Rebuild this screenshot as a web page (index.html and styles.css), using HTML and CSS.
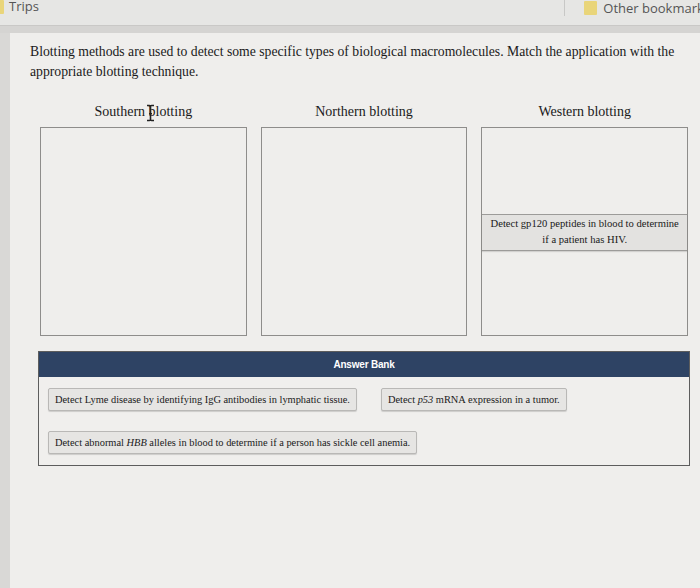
FILE: index.html
```html
<!DOCTYPE html>
<html>
<head>
<meta charset="utf-8">
<link rel="stylesheet" href="styles.css">
</head>
<body>
<div class="topbar">
  <div class="bm bm-left">
    <span class="folder"></span>
    <span class="bm-label">Trips</span>
  </div>
  <div class="bm bm-right">
    <span class="sep"></span>
    <span class="folder"></span>
    <span class="bm-label">Other bookmarks</span>
  </div>
</div>
<div class="band"></div>
<div class="page">
  <div class="gutter"></div>
  <div class="panel">
    <p class="question">Blotting methods are used to detect some specific types of biological macromolecules. Match the application with the appropriate blotting technique.</p>
    <div class="columns">
      <div class="col">
        <div class="col-title">Southern <span class="cursor-wrap">blotting<svg class="ibeam" width="9" height="18" viewBox="0 0 9 18"><path d="M1 1.5h2.5M5.5 1.5H8M4.5 2v14M1 16.5h2.5M5.5 16.5H8M3.5 1.5Q4.5 1.5 4.5 2.5M5.5 1.5Q4.5 1.5 4.5 2.5M3.5 16.5Q4.5 16.5 4.5 15.5M5.5 16.5Q4.5 16.5 4.5 15.5" stroke="#222" stroke-width="1.6" fill="none"/><rect x="3" y="9" width="3" height="1.4" fill="#222"/></svg></span></div>
        <div class="target"></div>
      </div>
      <div class="col">
        <div class="col-title">Northern blotting</div>
        <div class="target"></div>
      </div>
      <div class="col">
        <div class="col-title">Western blotting</div>
        <div class="target western">
          <div class="placed">Detect gp120 peptides in blood to determine if a patient has HIV.</div>
        </div>
      </div>
    </div>
    <div class="bank">
      <div class="bank-head">Answer Bank</div>
      <div class="bank-body">
        <div class="bank-row">
          <div class="chip">Detect Lyme disease by identifying IgG antibodies in lymphatic tissue.</div>
          <div class="chip">Detect <i>p53</i> mRNA expression in a tumor.</div>
        </div>
        <div class="bank-row">
          <div class="chip">Detect abnormal <i>HBB</i> alleles in blood to determine if a person has sickle cell anemia.</div>
        </div>
      </div>
    </div>
  </div>
</div>
</body>
</html>
```
FILE: styles.css
```css
html, body {
  margin: 0;
  padding: 0;
}
body {
  width: 700px;
  height: 588px;
  overflow: hidden;
  background: #dcdbd9;
  font-family: "Liberation Serif", "Times New Roman", serif;
  color: #1a1a1a;
}
.topbar {
  height: 25px;
  background: #e6e6e4;
  border-bottom: 1px solid #c9c8c6;
  display: flex;
  justify-content: space-between;
  align-items: flex-start;
  font-family: "Open Sans", "Liberation Sans", sans-serif;
  font-size: 13px;
  color: #555;
  overflow: hidden;
}
.bm {
  display: flex;
  align-items: flex-start;
  height: 100%;
}
.bm-left {
  margin-left: -9px;
}
.bm-left .bm-label {
  margin-left: 5px;
  margin-top: -3px;
}
.folder {
  display: block;
  width: 13px;
  height: 14px;
  background: #e9d57a;
  border-radius: 1px;
}
.bm-right {
  margin-right: -10px;
}
.sep {
  display: block;
  width: 1px;
  height: 16px;
  background: #c8c8c6;
  margin-right: 19px;
}
.bm-right .folder {
  margin-top: 1px;
}
.bm-right .bm-label {
  margin-left: 6px;
  margin-top: -1px;
  white-space: nowrap;
}
.band {
  height: 7px;
  background: #d5d4d2;
}
.page {
  display: flex;
  height: 555px;
}
.gutter {
  width: 10px;
  background: #d9d8d6;
}
.panel {
  flex: 1;
  background: #efeeec;
  padding: 9px 10px 0 20px;
}
.question {
  margin: 0;
  font-size: 13.7px;
  line-height: 20px;
  color: #1a1a1a;
}
.columns {
  display: flex;
  gap: 14px;
  margin: 20px 2px 0 10px;
}
.col {
  flex: 1;
  display: flex;
  flex-direction: column;
}
.col-title {
  text-align: center;
  font-size: 14px;
  height: 20px;
  line-height: 20px;
  margin-bottom: 5px;
  color: #1a1a1a;
}
.cursor-wrap {
  position: relative;
}
.ibeam {
  position: absolute;
  left: -3px;
  top: 0px;
}
.target {
  height: 209px;
  border: 1px solid #8e8d8b;
  background: #efeeec;
  box-sizing: border-box;
  display: flex;
  flex-direction: column;
  justify-content: center;
}
.western {
  justify-content: flex-start;
  padding-top: 86px;
}
.placed {
  background: #e3e2e0;
  border: 1px solid #9c9b99;
  border-left: none;
  border-right: none;
  font-size: 10.6px;
  line-height: 16px;
  text-align: center;
  padding: 1px 6px 2px;
  color: #1a1a1a;
  box-shadow: 0 1px 1px rgba(0,0,0,0.12);
}
.bank {
  margin: 15px 0 0 8px;
  border: 1px solid #5d5d5d;
  background: #f0efed;
}
.bank-head {
  background: #2e4364;
  color: #fff;
  font-family: "Liberation Sans", Arial, sans-serif;
  font-weight: bold;
  font-size: 10px;
  height: 25px;
  line-height: 25px;
  text-align: center;
  letter-spacing: -0.2px;
}
.bank-body {
  padding: 11px 9px 11px 9px;
  display: flex;
  flex-direction: column;
  gap: 20px;
}
.bank-row {
  display: flex;
  gap: 24px;
}
.chip {
  background: #e6e5e3;
  border: 1px solid #b9b8b6;
  border-radius: 2px;
  box-shadow: 0 1px 1px rgba(0,0,0,0.15);
  font-size: 10.4px;
  height: 23px;
  line-height: 21px;
  padding: 0 6px;
  box-sizing: border-box;
  color: #1a1a1a;
  white-space: nowrap;
}
```
